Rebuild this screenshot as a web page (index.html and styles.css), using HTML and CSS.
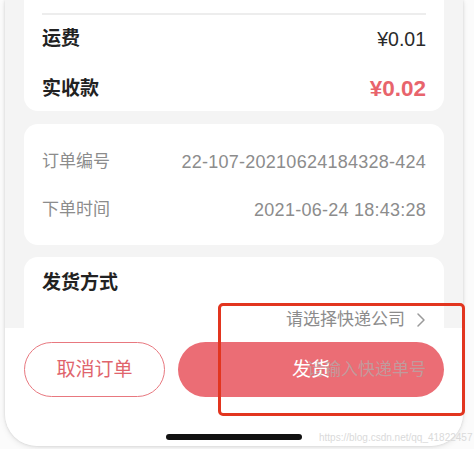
FILE: index.html
```html
<!DOCTYPE html>
<html lang="zh-CN">
<head>
<meta charset="utf-8">
<title>订单详情</title>
<link rel="stylesheet" href="styles.css">
</head>
<body>
<div class="page">
  <div class="phone">
    <div class="content">
      <section class="card card-first">
        <div class="divider"></div>
        <div class="row">
          <span class="label">运费</span>
          <span class="value">¥0.01</span>
        </div>
        <div class="row row-total">
          <span class="label">实收款</span>
          <span class="value price">¥0.02</span>
        </div>
      </section>
      <section class="card card-info">
        <div class="row">
          <span class="label muted">订单编号</span>
          <span class="value muted num">22-107-20210624184328-424</span>
        </div>
        <div class="row">
          <span class="label muted">下单时间</span>
          <span class="value muted num">2021-06-24 18:43:28</span>
        </div>
      </section>
      <section class="card card-ship">
        <div class="row title-row">
          <span class="label">发货方式</span>
        </div>
        <div class="select-row">
          <span class="select-text">请选择快递公司</span>
          <svg class="chevron" width="10" height="16" viewBox="0 0 10 16"><polyline points="2,2 8,8 2,14" fill="none" stroke="#9a9a9a" stroke-width="1.5" stroke-linecap="round" stroke-linejoin="round"/></svg>
        </div>
      </section>
    </div>
    <div class="bottom-bar">
      <div class="buttons">
        <button class="btn btn-cancel">取消订单</button>
        <button class="btn btn-ship"><span class="placeholder">请输入快递单号</span><span class="btn-text">发货</span></button>
      </div>
      <div class="home-indicator"></div>
    </div>
  </div>
  <div class="annotation"></div>
  <div class="watermark">https://blog.csdn.net/qq_41822457</div>
</div>
</body>
</html>
```
FILE: styles.css
```css
html, body {
  margin: 0;
  padding: 0;
  background: #ffffff;
}
body {
  width: 474px;
  height: 449px;
  overflow: hidden;
  font-family: "Liberation Sans", "Noto Sans CJK SC", sans-serif;
}
.page {
  position: relative;
  width: 474px;
  height: 449px;
  overflow: hidden;
  background: #fbfbfb;
}
.phone {
  position: relative;
  margin-left: 5px;
  width: 458px;
  height: 446px;
  background: #f4f4f4;
  border-radius: 0 0 32px 32px;
  box-shadow: 0 0 3px rgba(0,0,0,0.14), 0 2px 6px rgba(0,0,0,0.08);
  overflow: hidden;
}
.content {
  display: flex;
  flex-direction: column;
  padding: 0 19px;
}
.card {
  background: #ffffff;
  border-radius: 14px;
  padding: 0 18px;
}
.card-first {
  border-radius: 0 0 14px 14px;
  padding-top: 13px;
}
.divider {
  height: 2px;
  background: #ededed;
}
.row {
  height: 48px;
  display: flex;
  align-items: center;
  justify-content: space-between;
}
.row-total {
  box-sizing: border-box;
  padding-top: 3px;
}
.label {
  font-size: 19px;
  font-weight: 700;
  color: #222222;
  line-height: 24px;
}
.value {
  font-size: 19.5px;
  color: #2a2a2a;
  line-height: 24px;
}
.price {
  font-size: 22.5px;
  font-weight: 700;
  color: #e8646c;
}
.muted {
  font-size: 17px;
  font-weight: 400;
  color: #8c8c8c;
}
.num {
  font-size: 18px;
  letter-spacing: 0.25px;
}
.card-info {
  margin-top: 13px;
  padding-top: 14px;
  padding-bottom: 11px;
}
.card-ship {
  margin-top: 12px;
  padding-top: 2px;
  height: 120px;
}
.select-row {
  display: flex;
  justify-content: flex-end;
  align-items: center;
  gap: 11px;
  height: 26px;
}
.select-text {
  font-size: 17px;
  color: #8c8c8c;
  line-height: 22px;
}
.chevron {
  display: block;
}
.bottom-bar {
  position: absolute;
  left: 0;
  right: 0;
  bottom: 0;
  height: 118px;
  background: #ffffff;
  padding: 14px 19px 0;
  box-sizing: border-box;
}
.buttons {
  display: flex;
  gap: 13px;
}
.btn {
  height: 55px;
  border-radius: 28px;
  font-family: "Liberation Sans", "Noto Sans CJK SC", sans-serif;
  font-size: 19px;
  line-height: 24px;
  padding: 0;
  margin: 0;
}
.btn-cancel {
  width: 141px;
  background: #ffffff;
  border: 1px solid #e8787f;
  color: #e0646c;
}
.btn-ship {
  position: relative;
  flex: 1;
  background: #eb6d75;
  border: none;
  color: #ffffff;
}
.btn-text {
  position: relative;
  z-index: 1;
}
.placeholder {
  position: absolute;
  right: 18px;
  top: 50%;
  transform: translateY(-50%);
  font-size: 17px;
  line-height: 22px;
  color: rgba(175,175,175,0.7);
}
.home-indicator {
  margin: 37px 0 0 142px;
  width: 136px;
  height: 6px;
  border-radius: 3px;
  background: #111111;
}
.annotation {
  position: absolute;
  left: 218px;
  top: 303px;
  width: 247px;
  height: 113px;
  box-sizing: border-box;
  border: 3px solid #e2351f;
  border-radius: 5px;
}
.watermark {
  position: absolute;
  left: 319px;
  top: 432px;
  font-size: 10px;
  line-height: 12px;
  color: #dadada;
  white-space: nowrap;
}
```
